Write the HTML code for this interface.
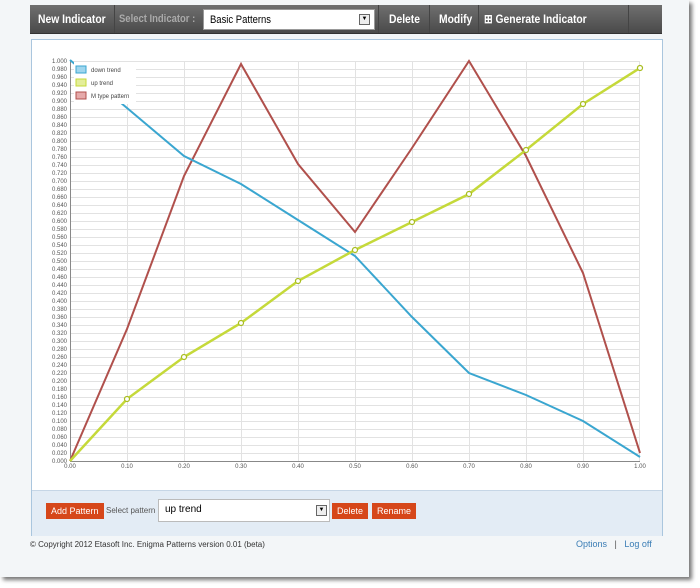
<!DOCTYPE html>
<html><head><meta charset="utf-8"><style>
body{margin:0;width:700px;height:588px;background:#fff;font-family:"Liberation Sans",sans-serif;position:relative;overflow:hidden}
.win{position:absolute;left:0;top:0;width:689px;height:577px;background:#f3f6f8;box-shadow:3px 3px 4px #777}
.bar{position:absolute;left:30px;top:5px;width:632px;height:28px;background:linear-gradient(#6f6f6f,#4a4a4a);border-bottom:1px solid #333}
.bar span{position:absolute;top:7px;color:#fff;font-weight:bold;font-size:12px;transform:scaleX(0.86);transform-origin:left;white-space:nowrap}
.sep{position:absolute;top:0;width:1px;height:28px;background:#444}
.sel{position:absolute;background:#fff;border:1px solid #999}
.panel{position:absolute;left:31px;top:39px;width:630px;height:495px;background:#fff;border:1px solid #aac6de}
.bot{position:absolute;left:0;top:450px;width:630px;height:45px;background:#e3ecf5;border-top:1px solid #c6d6e6}
.btn{position:absolute;top:12px;height:16px;background:#d6471a;color:#fff;font-size:9px;line-height:16px;padding:0 5px}
.dd{position:absolute;width:9px;height:9px;border:1px solid #666;background:#eee;font-size:6px;text-align:center;line-height:9px}
</style></head><body>
<div class="win">
<div class="bar">
<span style="left:8px">New Indicator</span>
<div class="sep" style="left:84px"></div>
<span style="left:89px;color:#aaa;font-size:11px;top:8px">Select Indicator :</span>
<div class="sel" style="left:173px;top:4px;width:170px;height:19px"><span style="position:absolute;left:6px;top:4px;color:#000;font-size:11px;font-weight:normal">Basic Patterns</span><div class="dd" style="left:155px;top:4px">▼</div></div>
<div class="sep" style="left:348px"></div>
<span style="left:359px">Delete</span>
<div class="sep" style="left:399px"></div>
<span style="left:409px">Modify</span>
<div class="sep" style="left:448px"></div>
<span style="left:454px">⊞ Generate Indicator</span>
<div class="sep" style="left:598px"></div>
</div>
<div class="panel">
<div class="bot">
<div class="btn" style="left:14px">Add Pattern</div>
<span style="position:absolute;left:74px;top:15px;font-size:8px;color:#555">Select pattern :</span>
<div class="sel" style="left:126px;top:8px;width:170px;height:21px;border-color:#bbb"><span style="position:absolute;left:6px;top:4px;font-size:10px;color:#000">up trend</span><div class="dd" style="left:157px;top:5px">▼</div></div>
<div class="btn" style="left:300px">Delete</div>
<div class="btn" style="left:340px">Rename</div>
</div>
</div>
<div style="position:absolute;left:30px;top:540px;font-size:8px;color:#333">© Copyright 2012 Etasoft Inc. Enigma Patterns version 0.01 (beta)</div>
<div style="position:absolute;left:576px;top:539px;font-size:9px;color:#3a7db5">Options &nbsp; <span style="color:#555">|</span> &nbsp; Log off</div>
</div>
<svg style="position:absolute;left:0;top:0" width="700" height="588">
<g stroke="#e2e2e2" stroke-width="1">
<path d="M70 61.5H640M70 69.5H640M70 77.5H640M70 85.5H640M70 93.5H640M70 101.5H640M70 109.5H640M70 117.5H640M70 125.5H640M70 133.5H640M70 141.5H640M70 149.5H640M70 157.5H640M70 165.5H640M70 173.5H640M70 181.5H640M70 189.5H640M70 197.5H640M70 205.5H640M70 213.5H640M70 221.5H640M70 229.5H640M70 237.5H640M70 245.5H640M70 253.5H640M70 261.5H640M70 269.5H640M70 277.5H640M70 285.5H640M70 293.5H640M70 301.5H640M70 309.5H640M70 317.5H640M70 325.5H640M70 333.5H640M70 341.5H640M70 349.5H640M70 357.5H640M70 365.5H640M70 373.5H640M70 381.5H640M70 389.5H640M70 397.5H640M70 405.5H640M70 413.5H640M70 421.5H640M70 429.5H640M70 437.5H640M70 445.5H640M70 453.5H640"/>
<path d="M127.5 61V461M184.5 61V461M241.5 61V461M298.5 61V461M355.5 61V461M412.5 61V461M469.5 61V461M526.5 61V461M583.5 61V461M639.5 61V461"/>
</g>
<path d="M70.5 60V461.5H640" fill="none" stroke="#888"/>
<g font-size="6" fill="#555" text-anchor="end" font-family="Liberation Sans">
<text x="67" y="63">1.000</text><text x="67" y="71">0.980</text><text x="67" y="79">0.960</text><text x="67" y="87">0.940</text><text x="67" y="95">0.920</text><text x="67" y="103">0.900</text><text x="67" y="111">0.880</text><text x="67" y="119">0.860</text><text x="67" y="127">0.840</text><text x="67" y="135">0.820</text><text x="67" y="143">0.800</text><text x="67" y="151">0.780</text><text x="67" y="159">0.760</text><text x="67" y="167">0.740</text><text x="67" y="175">0.720</text><text x="67" y="183">0.700</text><text x="67" y="191">0.680</text><text x="67" y="199">0.660</text><text x="67" y="207">0.640</text><text x="67" y="215">0.620</text><text x="67" y="223">0.600</text><text x="67" y="231">0.580</text><text x="67" y="239">0.560</text><text x="67" y="247">0.540</text><text x="67" y="255">0.520</text><text x="67" y="263">0.500</text><text x="67" y="271">0.480</text><text x="67" y="279">0.460</text><text x="67" y="287">0.440</text><text x="67" y="295">0.420</text><text x="67" y="303">0.400</text><text x="67" y="311">0.380</text><text x="67" y="319">0.360</text><text x="67" y="327">0.340</text><text x="67" y="335">0.320</text><text x="67" y="343">0.300</text><text x="67" y="351">0.280</text><text x="67" y="359">0.260</text><text x="67" y="367">0.240</text><text x="67" y="375">0.220</text><text x="67" y="383">0.200</text><text x="67" y="391">0.180</text><text x="67" y="399">0.160</text><text x="67" y="407">0.140</text><text x="67" y="415">0.120</text><text x="67" y="423">0.100</text><text x="67" y="431">0.080</text><text x="67" y="439">0.060</text><text x="67" y="447">0.040</text><text x="67" y="455">0.020</text><text x="67" y="463">0.000</text>
</g>
<g font-size="6" fill="#555" text-anchor="middle" font-family="Liberation Sans">
<text x="70" y="468">0.00</text><text x="127" y="468">0.10</text><text x="184" y="468">0.20</text><text x="241" y="468">0.30</text><text x="298" y="468">0.40</text><text x="355" y="468">0.50</text><text x="412" y="468">0.60</text><text x="469" y="468">0.70</text><text x="526" y="468">0.80</text><text x="583" y="468">0.90</text><text x="640" y="468">1.00</text>
</g>
<polyline fill="none" stroke="#b0504c" stroke-width="2" points="70,461 127,329 184,176 241,64 298,164 355,232 412,148 469,61 526,156 583,273 640,453"/>
<polyline fill="none" stroke="#3aa6d0" stroke-width="2" points="70,60 127,108 184,156 241,184 298,220 355,256 412,317 469,373 526,395 583,421 640,457"/>
<polyline fill="none" stroke="#c5d93a" stroke-width="2.5" points="70,461 127,399 184,357 241,323 298,281 355,250 412,222 469,194 526,150 583,104 640,68"/>
<g fill="#fff" stroke="#a8bd20" stroke-width="1.2">
<circle cx="127" cy="399" r="2.5"/><circle cx="184" cy="357" r="2.5"/><circle cx="241" cy="323" r="2.5"/><circle cx="298" cy="281" r="2.5"/><circle cx="355" cy="250" r="2.5"/><circle cx="412" cy="222" r="2.5"/><circle cx="469" cy="194" r="2.5"/><circle cx="526" cy="150" r="2.5"/><circle cx="583" cy="104" r="2.5"/><circle cx="640" cy="68" r="2.5"/>
</g>
<rect x="74" y="62" width="62" height="42" fill="#fff"/>
<rect x="76" y="66" width="10" height="7" fill="#9fd6ee" stroke="#3aa6d0"/>
<rect x="76" y="79" width="10" height="7" fill="#e4ee9a" stroke="#c5d93a"/>
<rect x="76" y="92" width="10" height="7" fill="#e6aaaa" stroke="#b0504c"/>
<g font-size="6" fill="#444" font-family="Liberation Sans"><text x="91" y="72">down trend</text><text x="91" y="85">up trend</text><text x="91" y="98">M type pattern</text></g>
</svg>
</body></html>
